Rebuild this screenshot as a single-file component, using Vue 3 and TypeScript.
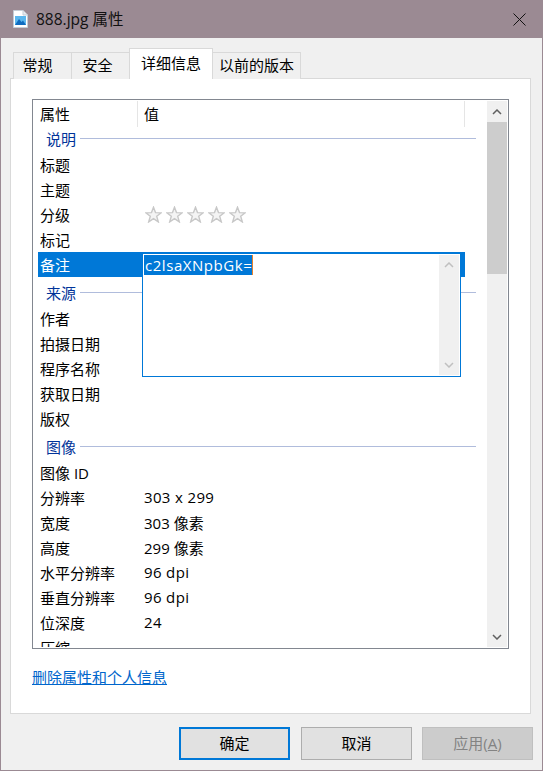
<script setup lang="ts">
type Item = { kind: 'group' | 'row' | 'stars'; label: string; value?: string; selected?: boolean }

const items: Item[] = [
  { kind: 'group', label: '说明' },
  { kind: 'row', label: '标题' },
  { kind: 'row', label: '主题' },
  { kind: 'stars', label: '分级' },
  { kind: 'row', label: '标记' },
  { kind: 'row', label: '备注', selected: true },
  { kind: 'group', label: '来源' },
  { kind: 'row', label: '作者' },
  { kind: 'row', label: '拍摄日期' },
  { kind: 'row', label: '程序名称' },
  { kind: 'row', label: '获取日期' },
  { kind: 'row', label: '版权' },
  { kind: 'group', label: '图像' },
  { kind: 'row', label: '图像 ID' },
  { kind: 'row', label: '分辨率', value: '303 x 299' },
  { kind: 'row', label: '宽度', value: '303 像素' },
  { kind: 'row', label: '高度', value: '299 像素' },
  { kind: 'row', label: '水平分辨率', value: '96 dpi' },
  { kind: 'row', label: '垂直分辨率', value: '96 dpi' },
  { kind: 'row', label: '位深度', value: '24' },
  { kind: 'row', label: '压缩' },
]
const tabs = ['常规', '安全', '详细信息', '以前的版本']
const stars = [0, 1, 2, 3, 4]
const isLatin = (v?: string) => !!v && /^[\x20-\x7e]+$/.test(v)
</script>

<template>
  <div class="window">
    <header class="titlebar">
      <svg class="file-icon" width="15" height="18" viewBox="0 0 15 18">
        <path d="M0.5 0.5H10L14.5 5V17.5H0.5Z" fill="#fff" stroke="#c4cdd6" />
        <path d="M10 0.5V5H14.5" fill="#e6ebf0" stroke="#c4cdd6" />
        <rect x="2" y="6" width="11" height="9" fill="#5bb7ee" />
        <path d="M2 15L6 9L8.5 12L10 10.5L13 15Z" fill="#0f6cc0" />
      </svg>
      <span class="title">888.jpg 属性</span>
      <svg class="close" width="13" height="13" viewBox="0 0 13 13">
        <path d="M0.5 0.5L12.5 12.5M12.5 0.5L0.5 12.5" stroke="#111" stroke-width="1" fill="none" />
      </svg>
    </header>

    <main class="body">
      <nav class="tabs">
        <div v-for="(t, i) in tabs" :key="t" class="tab" :class="['tab' + i, { active: i === 2 }]">{{ t }}</div>
      </nav>

      <section class="panel">
        <div class="listbox">
          <div class="list-main">
            <div class="list-head">
              <div class="head-cell name">属性</div>
              <div class="head-cell value">值</div>
            </div>
            <div class="list-rows">
              <template v-for="item in items" :key="item.label">
                <div v-if="item.kind === 'group'" class="group">
                  <span class="group-label">{{ item.label }}</span>
                  <span class="group-line"></span>
                </div>
                <div v-else class="row" :class="{ selected: item.selected }">
                  <span class="cell-name">{{ item.label }}</span>
                  <span v-if="item.kind === 'stars'" class="stars">
                    <svg v-for="s in stars" :key="s" width="17" height="17" viewBox="0 0 17 17">
                      <path d="M8.5 1.2L10.5 6.6L16.2 6.8L11.7 10.3L13.3 15.9L8.5 12.7L3.7 15.9L5.3 10.3L0.8 6.8L6.5 6.6Z" fill="#f4f4f4" stroke="#c8c8c8" stroke-width="1.4" />
                    </svg>
                  </span>
                  <span v-else class="cell-value" :class="{ latin: isLatin(item.value) }">{{ item.value }}</span>
                </div>
              </template>
            </div>
          </div>
          <div class="scrollbar">
            <div class="sb-btn">
              <svg width="10" height="6" viewBox="0 0 10 6"><path d="M1 5L5 1L9 5" stroke="#606060" stroke-width="1.5" fill="none" /></svg>
            </div>
            <div class="sb-thumb"></div>
            <div class="sb-track"></div>
            <div class="sb-btn">
              <svg width="10" height="6" viewBox="0 0 10 6"><path d="M1 1L5 5L9 1" stroke="#606060" stroke-width="1.5" fill="none" /></svg>
            </div>
          </div>

          <div class="editor">
            <div class="editor-text"><span class="sel">c2lsaXNpbGk=</span></div>
            <div class="editor-sb">
              <svg width="10" height="6" viewBox="0 0 10 6"><path d="M1 5L5 1L9 5" stroke="#c0c0c0" stroke-width="1.5" fill="none" /></svg>
              <svg width="10" height="6" viewBox="0 0 10 6"><path d="M1 1L5 5L9 1" stroke="#c0c0c0" stroke-width="1.5" fill="none" /></svg>
            </div>
          </div>
        </div>

        <a class="link" href="#">删除属性和个人信息</a>
      </section>

      <footer class="buttons">
        <button class="btn primary">确定</button>
        <button class="btn cancel">取消</button>
        <button class="btn disabled">应用(<u>A</u>)</button>
      </footer>
    </main>
  </div>
</template>

<style>
html, body { margin: 0; background: #f0f0f0; }
</style>

<style scoped>
.window {
  box-sizing: border-box;
  width: 543px;
  height: 771px;
  display: flex;
  flex-direction: column;
  border: 1px solid #9b8a93;
  border-top: none;
  background: #f0f0f0;
  font-family: "Open Sans", "Noto Sans CJK SC", sans-serif;
  font-size: 15px;
  color: #000;
  overflow: hidden;
}
.titlebar {
  height: 38px;
  flex: none;
  display: flex;
  align-items: center;
  background: #9b8a93;
  padding: 0 16px 0 12px;
}
.file-icon { flex: none; margin-top: -1px; }
.title { margin-left: 8px; font-size: 15.5px; color: #111; margin-top: -2px; }
.close { margin-left: auto; }
.body {
  flex: 1;
  display: flex;
  flex-direction: column;
  padding: 10px 0 0 9px;
  min-height: 0;
}
.tabs {
  display: flex;
  align-items: flex-end;
  height: 31px;
  padding-left: 3px;
  position: relative;
  z-index: 2;
  margin-bottom: -1px;
}
.tab {
  box-sizing: border-box;
  height: 27px;
  display: flex;
  align-items: center;
  justify-content: center;
  border: 1px solid #d9d9d9;
  border-bottom: none;
  border-left: none;
  background: #f0f0f0;
  line-height: 1;
  padding-bottom: 2px;
}
.tab0 { width: 59px; border-left: 1px solid #d9d9d9; padding-right: 10px; }
.tab1 { width: 58px; padding-right: 6px; }
.tab2 { width: 83px; }
.tab3 { width: 88px; }
.tab.active {
  height: 31px;
  background: #fff;
  border-left: 1px solid #d9d9d9;
  margin-left: -1px;
  width: 84px;
  padding-bottom: 2px;
  position: relative;
}
.panel {
  box-sizing: border-box;
  width: 521px;
  height: 636px;
  flex: none;
  background: #fff;
  border: 1px solid #d9d9d9;
  padding: 20px 0 0 21px;
  display: flex;
  flex-direction: column;
  align-items: flex-start;
}
.listbox {
  box-sizing: border-box;
  width: 477px;
  height: 550px;
  flex: none;
  border: 1px solid #828790;
  display: flex;
  position: relative;
  padding: 1px 1px 1px 0;
  overflow: hidden;
  background: #fff;
}
.list-main {
  flex: 1;
  min-width: 0;
  overflow: hidden;
}
.list-head {
  display: flex;
  height: 26px;
}
.head-cell {
  display: flex;
  align-items: center;
  padding-bottom: 2px;
  box-sizing: border-box;
  border-right: 1px solid #e5e5e5;
}
.head-cell.name { width: 105px; padding-left: 7px; }
.head-cell.value { width: 327px; padding-left: 6px; }
.list-rows { padding-left: 5px; margin-top: -4px; }
.row {
  height: 25px;
  display: flex;
  align-items: center;
  width: 427px;
  padding-bottom: 1px;
  box-sizing: border-box;
}
.row.selected { background: #0078d7; color: #fff; }
.cell-name { width: 106px; flex: none; padding-left: 2px; box-sizing: border-box; }
.cell-value.latin { letter-spacing: 0.35px; }
.stars { display: flex; gap: 4px; margin-left: 1px; }
.group {
  height: 29px;
  display: flex;
  align-items: center;
  padding-top: 1px;
  box-sizing: border-box;
  width: 438px;
  padding-left: 8px;
  color: #003399;
}
.group-label { flex: none; }
.group-line {
  flex: 1;
  height: 1px;
  background: #b0bcdc;
  margin-left: 4px;
}
.scrollbar {
  flex: none;
  width: 20px;
  height: 100%;
  display: flex;
  flex-direction: column;
  background: #f0f0f0;
}
.sb-btn {
  flex: none;
  height: 21px;
  display: flex;
  align-items: center;
  justify-content: center;
}
.sb-thumb { flex: none; height: 152px; background: #cdcdcd; }
.sb-track { flex: 1; }
.editor {
  position: absolute;
  left: 109px;
  top: 153px;
  box-sizing: border-box;
  width: 319px;
  height: 124px;
  border: 1px solid #0078d7;
  background: #fff;
  display: flex;
  padding: 1px;
}
.editor-text { flex: 1; min-width: 0; line-height: 20px; }
.sel {
  display: inline-block;
  background: #0078d7;
  color: #fff;
  border-right: 1px solid #e8822a;
  line-height: 20px;
  padding-left: 1px;
  letter-spacing: 0.55px;
}
.editor-sb {
  flex: none;
  width: 20px;
  background: #f0f0f0;
  display: flex;
  flex-direction: column;
  align-items: center;
  justify-content: space-between;
  padding: 7px 0;
  box-sizing: border-box;
}
.link {
  margin-top: 18px;
  color: #0066cc;
  font-size: 15px;
  line-height: 20px;
  text-decoration: underline;
}
.buttons {
  display: flex;
  gap: 10px;
  margin-top: 13px;
  padding-left: 169px;
}
.btn {
  box-sizing: border-box;
  width: 111px;
  height: 33px;
  background: #e1e1e1;
  border: 1px solid #adadad;
  font: inherit;
  color: #000;
  padding: 0 0 3px;
}
.btn.primary { border: 2px solid #0078d7; }
.btn.cancel { margin-left: 1px; }
.btn.disabled { background: #cccccc; border-color: #bfbfbf; color: #838383; }
</style>
